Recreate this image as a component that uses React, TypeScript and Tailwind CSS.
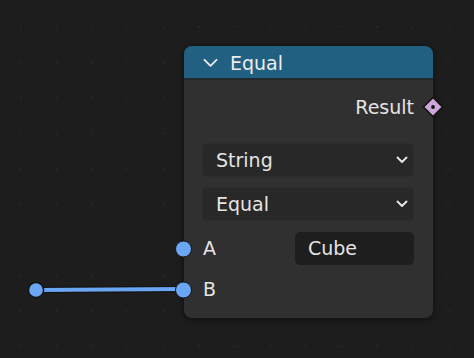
import React from "react";

const font = { fontFamily: '"DejaVu Sans", "Liberation Sans", sans-serif' };

function Chevron({ className }: { className?: string }) {
  return (
    <svg width="12" height="8" viewBox="0 0 12 8" className={className}>
      <path d="M1.5 1.5 L6 6 L10.5 1.5" fill="none" stroke="#e6e6e6" strokeWidth="1.9" strokeLinecap="round" strokeLinejoin="round" />
    </svg>
  );
}

function Socket() {
  return (
    <div className="absolute left-[-9px] top-1/2 -translate-y-1/2 w-[17px] h-[17px] rounded-full bg-[#6ba6f5] border-[1.5px] border-[#141414]" />
  );
}

function Dropdown({ label }: { label: string }) {
  return (
    <div className="h-[34px] rounded-[5px] bg-[#282828] border border-[#2c2c2c] flex items-center justify-between pl-[13px] pr-[5px]">
      <span className="text-[19px] text-[#e4e4e4] leading-none">{label}</span>
      <Chevron />
    </div>
  );
}

export default function App() {
  return (
    <div className="relative w-[474px] h-[358px] overflow-hidden bg-[#1d1d1d]" style={font}>
      <svg className="absolute inset-0" width="474" height="358">
        <defs>
          <pattern id="dots" x="3.2" y="9.2" width="35.6" height="35.5" patternUnits="userSpaceOnUse">
            <rect x="17" y="17" width="1.6" height="1.6" fill="#2b2b2b" />
          </pattern>
        </defs>
        <rect width="474" height="358" fill="url(#dots)" />
      </svg>

      {/* link */}
      <svg className="absolute inset-0" width="474" height="358">
        <line x1="36" y1="290" x2="183" y2="289" stroke="#141414" strokeWidth="6.5" />
        <line x1="36" y1="290" x2="183" y2="289" stroke="#6ba6f5" strokeWidth="4" />
        <circle cx="36" cy="290" r="7.6" fill="#6ba6f5" stroke="#141414" strokeWidth="1.5" />
      </svg>

      {/* node */}
      <div className="absolute left-[184px] top-[46px] w-[249px] h-[272px] rounded-[8px] bg-[#303030] shadow-[0_0_0_1px_#161616,0_2px_6px_rgba(0,0,0,0.5)] flex flex-col">
        <div className="h-[34px] rounded-t-[8px] bg-[#216080] border-b-2 border-[#222a30] flex items-center pl-[19px] gap-[12px]">
          <svg width="15" height="10" viewBox="0 0 15 10" className="mt-[1px]">
            <path d="M1.5 1.8 L7.5 7.8 L13.5 1.8" fill="none" stroke="#e8e8e8" strokeWidth="1.9" strokeLinecap="round" strokeLinejoin="round" />
          </svg>
          <span className="text-[19px] text-[#ececec] leading-none mt-[2px]">Equal</span>
        </div>

        <div className="relative mt-[12px] h-[30px] flex items-center justify-end pr-[19px]">
          <span className="text-[19px] text-[#e4e4e4] leading-none">Result</span>
          <svg className="absolute right-[-11px] top-1/2 -translate-y-1/2" width="22" height="22" viewBox="0 0 22 22">
            <polygon points="11,1.5 20.5,11 11,20.5 1.5,11" fill="#cfa6d9" stroke="#141414" strokeWidth="1.6" />
            <circle cx="11" cy="11" r="1.9" fill="#141414" />
          </svg>
        </div>

        <div className="mt-[21px] px-[18px] flex flex-col gap-[10px] pr-[19px]">
          <Dropdown label="String" />
          <Dropdown label="Equal" />
        </div>

        <div className="relative mt-[11px] h-[33px] flex items-center justify-between pl-[19px] pr-[19px]">
          <Socket />
          <span className="text-[19px] text-[#e4e4e4] leading-none">A</span>
          <div className="w-[119px] h-[33px] rounded-[5px] bg-[#1e1e1e] flex items-center pl-[13px]">
            <span className="text-[19px] text-[#e4e4e4] leading-none">Cube</span>
          </div>
        </div>

        <div className="relative mt-[8px] h-[33px] flex items-center pl-[19px]">
          <Socket />
          <span className="text-[19px] text-[#e4e4e4] leading-none">B</span>
        </div>
      </div>
    </div>
  );
}
